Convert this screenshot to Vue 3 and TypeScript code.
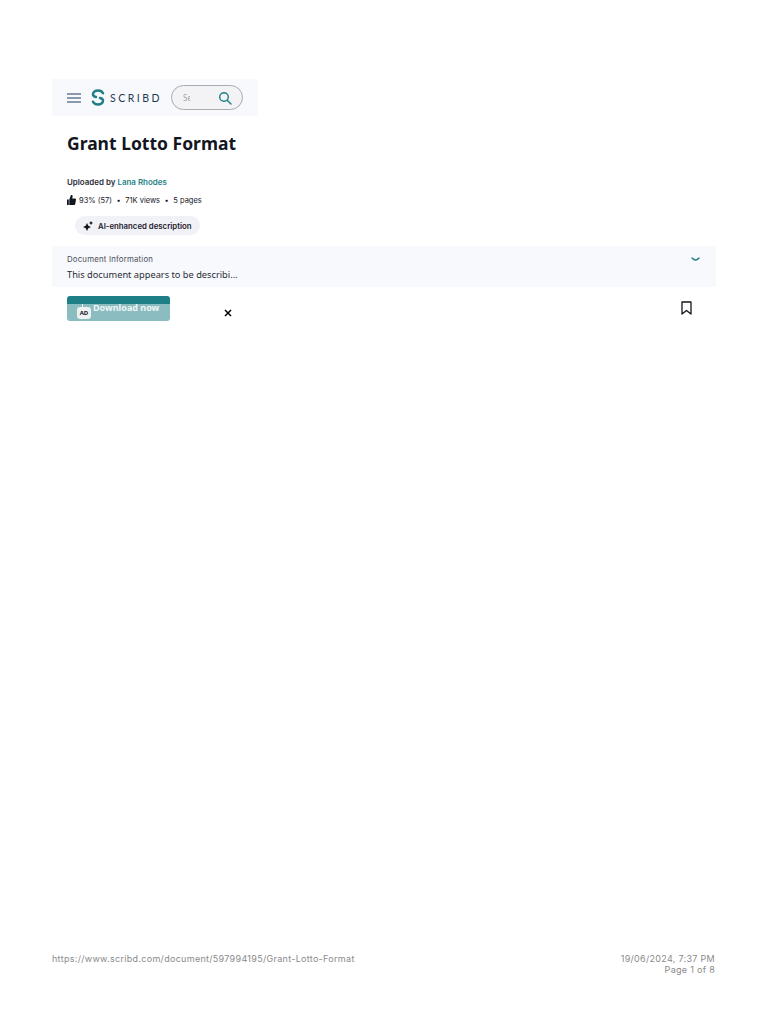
<script setup lang="ts">
const docUrl = 'https://www.scribd.com/document/597994195/Grant-Lotto-Format'
</script>

<template>
  <div class="page">
    <header class="topbar">
      <svg class="menu" width="14" height="10" viewBox="0 0 14 10">
        <path d="M0 1h14M0 5h14M0 9h14" stroke="#1e3a5f" stroke-width="1.2" fill="none" />
      </svg>
      <svg class="logo" width="14" height="17" viewBox="0 0 14 17">
        <path d="M12 4.3C11 2.3 9.5 1.5 7.2 1.5 4.2 1.500 2 3 2 5.2 2 6.8 3.2 7.6 5 8" stroke="#1e7f86" stroke-width="2.5" fill="none" stroke-linecap="round" />
        <path d="M2 12.7C3 14.7 4.5 15.5 6.8 15.5 9.8 15.5 12 14 12 11.8 12 10.2 10.8 9.4 9 9" stroke="#1e7f86" stroke-width="2.5" fill="none" stroke-linecap="round" />
      </svg>
      <span class="brand">SCRIBD</span>
      <div class="search">
        <span class="search-text">Se</span>
        <svg width="14" height="14" viewBox="0 0 14 14">
          <circle cx="6" cy="6" r="4.3" stroke="#1e7f86" stroke-width="1.4" fill="none" />
          <path d="M9.2 9.2 13 13" stroke="#1e7f86" stroke-width="1.4" stroke-linecap="round" />
        </svg>
      </div>
    </header>

    <section class="intro">
      <h1>Grant Lotto Format</h1>
      <p class="uploader">Uploaded by <a>Lana Rhodes</a></p>
      <div class="stats">
        <svg width="9" height="10" viewBox="0 0 9 10">
          <path d="M0 4.5h1.800V10H0zM2.300 4.500 3.800.4C3.900.1 4.200 0 4.500 0 5.400 0 5.800.7 5.600 1.500L5.200 3.400H8c.7 0 1.100.6 1 1.200L8.200 9.200c-.1.500-.5.800-1 .8H2.300z" fill="#14161f" />
        </svg>
        <span>93% (57)</span><i>•</i><span>71K views</span><i>•</i><span>5 pages</span>
      </div>
      <div class="ai-chip">
        <svg width="10" height="10" viewBox="0 0 10 10">
          <path d="M4 2 5.300 4.700 8 6 5.300 7.300 4 10 2.700 7.300 0 6 2.700 4.700zM8 0l.7 1.300L10 2l-1.300.7L8 4l-.7-1.300L6 2l1.300-.7z" fill="#14161f" />
        </svg>
        <span>AI-enhanced description</span>
      </div>
    </section>

    <section class="doc-info">
      <div>
        <div class="doc-label">Document Information</div>
        <div class="doc-text">This document appears to be describi…</div>
      </div>
      <svg class="chevron" width="9" height="5" viewBox="0 0 9 5">
        <path d="M1 1c1.200 1.300 2.300 2 3.500 2S6.800 2.300 8 1" stroke="#1e7f86" stroke-width="1.4" fill="none" stroke-linecap="round" />
      </svg>
    </section>

    <section class="actions">
      <button class="download" type="button">
        <span class="download-icon"></span>
        <span class="download-label">Download now</span>
        <span class="ad-badge">AD</span>
      </button>
      <svg class="close" width="8" height="8" viewBox="0 0 8 8">
        <path d="M1 1l6 6M7 1 1 7" stroke="#000" stroke-width="1.5" />
      </svg>
      <svg class="bookmark" width="11" height="14" viewBox="0 0 11 14">
        <path d="M1 1h9v12L5.500 9.500 1 13z" stroke="#14161f" stroke-width="1.3" fill="none" stroke-linejoin="round" />
      </svg>
    </section>

    <footer class="print-footer">
      <span class="url">{{ docUrl }}</span>
      <div class="meta">
        <div>19/06/2024, 7:37 PM</div>
        <div>Page 1 of 8</div>
      </div>
    </footer>
  </div>
</template>

<style>
html, body {
  background: #fff;
}
</style>

<style scoped>
.page {
  box-sizing: border-box;
  height: 1024px;
  padding: 79px 52px 49px;
  display: flex;
  flex-direction: column;
  font-family: "Noto Sans", "Liberation Sans", sans-serif;
  color: #14161f;
}

.topbar {
  width: 206px;
  height: 37px;
  box-sizing: border-box;
  padding-left: 15px;
  background: #f8f9fd;
  display: flex;
  align-items: center;
}

.menu {
  margin-right: 10px;
}

.logo {
  margin-right: 5px;
}

.brand {
  font-family: "Lato", sans-serif;
  font-size: 10.5px;
  letter-spacing: 2.5px;
  color: #1e3a4f;
  width: 61px;
  flex: none;
}

.search {
  width: 72px;
  height: 25px;
  box-sizing: border-box;
  border: 1px solid #a9abb1;
  border-radius: 13px;
  background: #f3f3f5;
  display: flex;
  align-items: center;
  justify-content: space-between;
  padding: 0 10px 0 11px;
}

.search-text {
  width: 7px;
  overflow: hidden;
  font-size: 8px;
  color: #a0a2a8;
}

.intro {
  padding-left: 15px;
}

h1 {
  margin: 15px 0 0;
  font-size: 17.5px;
  line-height: 24px;
  font-weight: 700;
  color: #14161f;
}

.uploader {
  margin: 21px 0 0;
  font-family: "Inter", sans-serif;
  font-size: 7.95px;
  line-height: 12px;
  font-weight: 600;
  color: #2a2c36;
}

.uploader a {
  color: #1e7f86;
}

.stats {
  margin-top: 6px;
  height: 12px;
  display: flex;
  align-items: center;
  font-family: "Inter", sans-serif;
  font-size: 7.5px;
  color: #14161f;
}

.stats svg {
  margin-right: 3px;
}

.stats i {
  font-style: normal;
  margin: 0 4.5px;
}

.ai-chip {
  margin: 10px 0 0 8px;
  width: 125px;
  height: 19px;
  box-sizing: border-box;
  padding-left: 8px;
  border-radius: 10px;
  background: #f1f2f8;
  display: flex;
  align-items: center;
  gap: 5px;
  font-family: "Inter", sans-serif;
  font-size: 7.8px;
  font-weight: 600;
  color: #1e2029;
}

.doc-info {
  margin-top: 11px;
  height: 41px;
  box-sizing: border-box;
  padding: 8px 16px 0 15px;
  background: #f8f9fd;
  display: flex;
  justify-content: space-between;
  align-items: flex-start;
}

.doc-label {
  font-family: "Inter", sans-serif;
  font-size: 7.8px;
  line-height: 11px;
  color: #4b4e5a;
  letter-spacing: 0.2px;
}

.doc-text {
  margin-top: 4px;
  font-size: 9.25px;
  line-height: 12px;
  color: #2a2c36;
}

.chevron {
  margin-top: 3px;
}

.actions {
  margin-top: 9px;
  padding: 0 24px 0 15px;
  display: flex;
  align-items: center;
}

.download {
  position: relative;
  width: 103px;
  height: 25px;
  padding: 0;
  border: none;
  border-radius: 3px;
  background: linear-gradient(#1e7f86 0 8px, #8abcc0 8px);
  font-family: "Noto Sans", sans-serif;
  font-size: 9px;
  font-weight: 700;
  color: #eef5f6;
}

.download-icon {
  position: absolute;
  left: 15px;
  top: 8px;
  width: 1px;
  height: 4px;
  background: #eef5f6;
}

.download-label {
  position: absolute;
  left: 26px;
  top: 5px;
  line-height: 13px;
}

.ad-badge {
  position: absolute;
  left: 10px;
  top: 11px;
  width: 14px;
  height: 12px;
  border-radius: 3px;
  background: #eef0f2;
  color: #14161f;
  font-size: 6px;
  line-height: 12px;
  text-align: center;
}

.close {
  margin: 9px 0 0 54px;
}

.bookmark {
  margin-left: auto;
  margin-bottom: 1px;
}

.print-footer {
  margin-top: auto;
  display: flex;
  justify-content: space-between;
  align-items: flex-start;
  font-family: "Inter", "Liberation Sans", sans-serif;
  font-size: 9px;
  line-height: 11px;
  letter-spacing: 0.3px;
  color: #8a8a8a;
}

.meta {
  text-align: right;
  padding-right: 1px;
}
</style>
